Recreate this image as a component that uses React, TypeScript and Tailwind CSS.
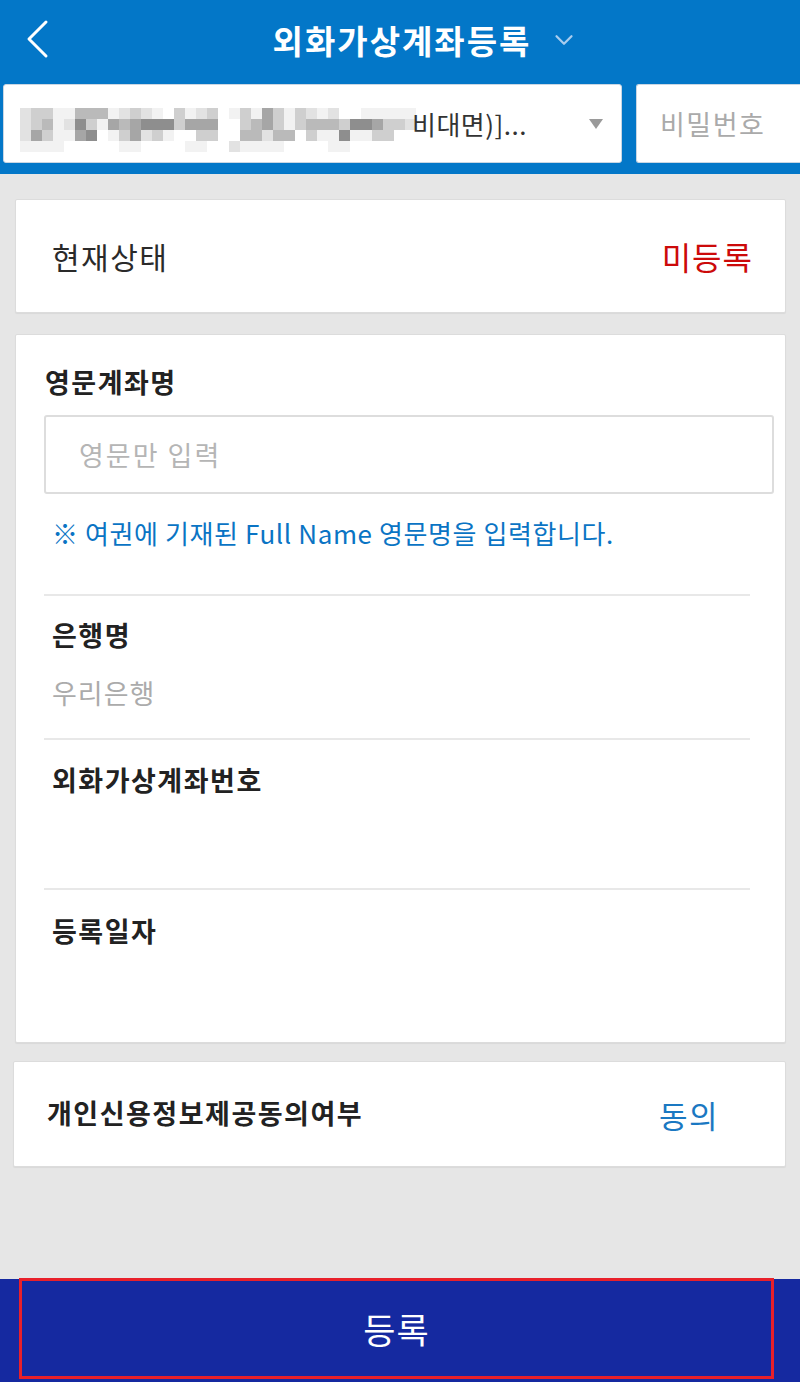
import { ChevronDown } from 'lucide-react';

const FONT = { fontFamily: '"Noto Sans CJK KR", "Noto Sans", sans-serif' };

const shades = [
  'bg-transparent',
  'bg-[#f2f2f2]',
  'bg-[#e2e2e2]',
  'bg-[#cfcfcf]',
  'bg-[#bababa]',
  'bg-[#a6a6a6]',
  'bg-[#8e8e8e]',
  'bg-[#7a7a7a]',
];

// pixelated (masked) account name
const mosaicA = [
  '233114441232103123',
  '234126315456663555',
  '253115601352310033',
  '111100000110000110',
];
const mosaicB = [
  '13153132120011111',
  '03453134443665332',
  '04424403116113300',
  '21111000011000000',
];

function Mosaic({ rows }: { rows: string[] }) {
  return (
    <div className="flex flex-col">
      {rows.map((r, i) => (
        <div key={i} className="flex">
          {r.split('').map((c, j) => (
            <div key={j} className={`w-[11px] h-[11px] ${shades[Number(c)]}`} />
          ))}
        </div>
      ))}
    </div>
  );
}

function Divider() {
  return <div className="h-[2px] bg-[#e8e8e8] ml-[28px] mr-[35px]" />;
}

function App() {
  return (
    <div className="w-[800px] h-[1382px] bg-[#e6e6e6] flex flex-col overflow-hidden" style={FONT}>
      <header className="bg-[#0377c8] h-[174px] flex flex-col">
        <div className="h-[80px] relative flex items-center justify-center">
          <svg className="absolute left-[24px] top-[19px]" width="28" height="40" viewBox="0 0 28 40">
            <path d="M22 3 L5 20 L22 37" fill="none" stroke="white" strokeWidth="3" strokeLinecap="round" strokeLinejoin="round" />
          </svg>
          <div className="flex items-center gap-[18px] ml-[52px]">
            <span className="text-white text-[33px] font-bold tracking-[2px] leading-none">외화가상계좌등록</span>
            <ChevronDown className="text-[#a9cdee] w-[30px] h-[30px]" strokeWidth={1.8} />
          </div>
        </div>
        <div className="mt-[4px] flex h-[79px]">
          <div className="ml-[3px] w-[619px] bg-white rounded-[3px] border border-[#c9d6e3] flex items-center pl-[16px] pr-[18px]">
            <div className="flex items-start mt-[12px]">
              <Mosaic rows={mosaicA} />
              <div className="w-[11px]" />
              <Mosaic rows={mosaicB} />
            </div>
            <span className="text-[#333] text-[26px] tracking-[0.5px] leading-none ml-[-4px]">비대면)]...</span>
            <div className="flex-1" />
            <div className="w-0 h-0 border-l-[7px] border-r-[7px] border-t-[10px] border-l-transparent border-r-transparent border-t-[#9a9a9a]" />
          </div>
          <div className="ml-[14px] flex-1 bg-white rounded-l-[3px] border border-r-0 border-[#c9d6e3] flex items-center pl-[23px]">
            <span className="text-[#aaaaaa] text-[27px] tracking-[1.5px] leading-none">비밀번호</span>
          </div>
        </div>
      </header>

      <section className="mt-[25px] ml-[15px] w-[771px] h-[114px] bg-white border border-[#dcdcdc] rounded-[2px] shadow-[0_1px_1px_rgba(0,0,0,0.06)] flex items-center justify-between pl-[36px] pr-[32px]">
        <span className="text-[#2a2a2a] text-[30px] tracking-[1.5px] leading-none">현재상태</span>
        <span className="text-[#cc0a0a] text-[32px] tracking-[1px] leading-none">미등록</span>
      </section>

      <section className="mt-[21px] ml-[15px] w-[771px] h-[709px] bg-white border border-[#dcdcdc] rounded-[2px] shadow-[0_1px_1px_rgba(0,0,0,0.06)] flex flex-col">
        <div className="h-[80px] flex items-center pl-[29px] pt-[12px]">
          <span className="text-[#222] text-[27px] font-bold tracking-[1.5px] leading-none">영문계좌명</span>
        </div>
        <div className="ml-[28px] w-[730px] h-[79px] border-2 border-[#dddddd] rounded-[3px] flex items-center pl-[33px]">
          <span className="text-[#b5b5b5] text-[27px] tracking-[2px] leading-none">영문만 입력</span>
        </div>
        <div className="h-[78px] flex items-center pl-[36px]">
          <span className="text-[#0a74c4] text-[26px] leading-none tracking-[0.6px]">※ 여권에 기재된 Full Name 영문명을 입력합니다.</span>
        </div>
        <div className="h-[22px]" />
        <Divider />
        <div className="h-[142px] flex flex-col pl-[36px]">
          <div className="h-[76px] flex items-center">
            <span className="text-[#222] text-[27px] font-bold tracking-[1.5px] leading-none">은행명</span>
          </div>
          <span className="text-[#ababab] text-[27px] tracking-[1px] leading-none mt-[7px]">우리은행</span>
        </div>
        <Divider />
        <div className="h-[148px] flex flex-col pl-[36px]">
          <div className="h-[78px] flex items-center">
            <span className="text-[#222] text-[27px] font-bold tracking-[1.5px] leading-none">외화가상계좌번호</span>
          </div>
        </div>
        <Divider />
        <div className="flex flex-col pl-[36px]">
          <div className="h-[80px] flex items-center">
            <span className="text-[#222] text-[27px] font-bold tracking-[1.5px] leading-none">등록일자</span>
          </div>
        </div>
      </section>

      <section className="mt-[18px] ml-[13px] w-[773px] h-[106px] bg-white border border-[#dcdcdc] rounded-[2px] shadow-[0_1px_1px_rgba(0,0,0,0.06)] flex items-center justify-between pl-[33px] pr-[66px]">
        <span className="text-[#222] text-[27px] font-bold leading-none tracking-[1.5px] -mt-[4px]">개인신용정보제공동의여부</span>
        <span className="text-[#1a78c2] text-[31px] tracking-[1.5px] leading-none">동의</span>
      </section>

      <div className="flex-1" />

      <div className="h-[103px] bg-[#1529a0] flex">
        <button className="ml-[19px] w-[755px] h-[101px] -mt-[1px] border-[3px] border-[#e8202a] flex items-center justify-center">
          <span className="text-white text-[35px] tracking-[1px] leading-none">등록</span>
        </button>
      </div>
    </div>
  );
}

export default App;
